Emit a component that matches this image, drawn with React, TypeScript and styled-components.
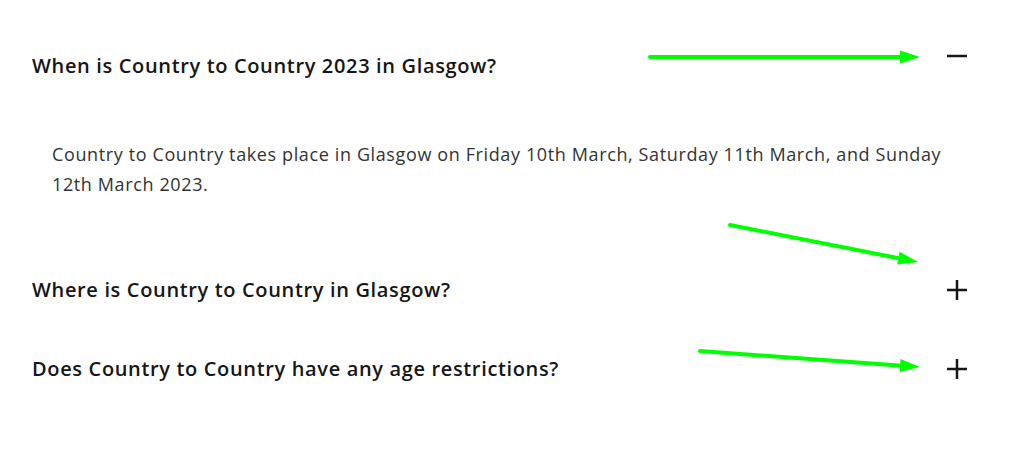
import { useState } from "react";
import styled, { createGlobalStyle } from "styled-components";

interface Faq {
  question: string;
  answer: string;
}

const faqs: Faq[] = [
  {
    question: "When is Country to Country 2023 in Glasgow?",
    answer:
      "Country to Country takes place in Glasgow on Friday 10th March, Saturday 11th March, and Sunday 12th March 2023.",
  },
  {
    question: "Where is Country to Country in Glasgow?",
    answer: "Country to Country is held at the OVO Hydro, Glasgow.",
  },
  {
    question: "Does Country to Country have any age restrictions?",
    answer: "Under 14s must be accompanied by an adult.",
  },
];

export default function App() {
  const [open, setOpen] = useState<number | null>(0);

  return (
    <Page>
      <GlobalStyle />
      <List>
        {faqs.map((faq, i) => (
          <Item key={faq.question}>
            <Header onClick={() => setOpen(open === i ? null : i)}>
              <Question>{faq.question}</Question>
              <Toggle open={open === i}>
                <svg width="22" height="22" viewBox="0 0 22 22">
                  <rect x="1" y="9.75" width="20" height="2.5" fill="#161616" />
                  {open !== i && (
                    <rect x="9.75" y="1" width="2.5" height="20" fill="#161616" />
                  )}
                </svg>
              </Toggle>
            </Header>
            {open === i && <Answer>{faq.answer}</Answer>}
          </Item>
        ))}
      </List>
      <Arrows width="1026" height="465" viewBox="0 0 1026 465">
        <Arrow x1={650} y1={57} x2={920} y2={57} />
        <Arrow x1={730} y1={225} x2={918} y2={262} />
        <Arrow x1={700} y1={351} x2={920} y2={367} />
      </Arrows>
    </Page>
  );
}

function Arrow({ x1, y1, x2, y2 }: { x1: number; y1: number; x2: number; y2: number }) {
  const angle = Math.atan2(y2 - y1, x2 - x1);
  const len = 20;
  const half = 6.5;
  const bx = x2 - len * Math.cos(angle);
  const by = y2 - len * Math.sin(angle);
  const px = -Math.sin(angle) * half;
  const py = Math.cos(angle) * half;
  return (
    <g>
      <line
        x1={x1}
        y1={y1}
        x2={bx + 2 * Math.cos(angle)}
        y2={by + 2 * Math.sin(angle)}
        stroke="#00ff00"
        strokeWidth="4"
        strokeLinecap="round"
      />
      <polygon points={`${x2},${y2} ${bx + px},${by + py} ${bx - px},${by - py}`} fill="#00ff00" />
    </g>
  );
}

const GlobalStyle = createGlobalStyle`
  html, body {
    margin: 0;
    background: #ffffff;
  }
`;

const Page = styled.div`
  position: relative;
  width: 1026px;
  height: 465px;
  padding-top: 26px;
  box-sizing: border-box;
  font-family: "Open Sans", "Noto Sans", sans-serif;
  color: #161616;
`;

const List = styled.div`
  display: flex;
  flex-direction: column;
`;

const Item = styled.div`
  display: flex;
  flex-direction: column;
`;

const Header = styled.div`
  display: flex;
  align-items: center;
  justify-content: space-between;
  height: 79px;
  padding: 0 58px 0 32px;
  cursor: pointer;
`;

const Question = styled.h3`
  margin: 0;
  font-size: 20px;
  font-weight: 600;
  letter-spacing: 0.65px;
`;

const Toggle = styled.span<{ open: boolean }>`
  display: flex;
  width: 22px;
  height: 22px;
  transform: translateY(${(p) => (p.open ? "-10px" : "0")});
`;

const Answer = styled.p`
  margin: 0;
  padding: 34px 0 51px 52px;
  width: 900px;
  font-size: 18px;
  font-weight: 400;
  line-height: 30px;
  letter-spacing: 0.62px;
  color: #333333;
`;

const Arrows = styled.svg`
  position: absolute;
  left: 0;
  top: 0;
  pointer-events: none;
`;
